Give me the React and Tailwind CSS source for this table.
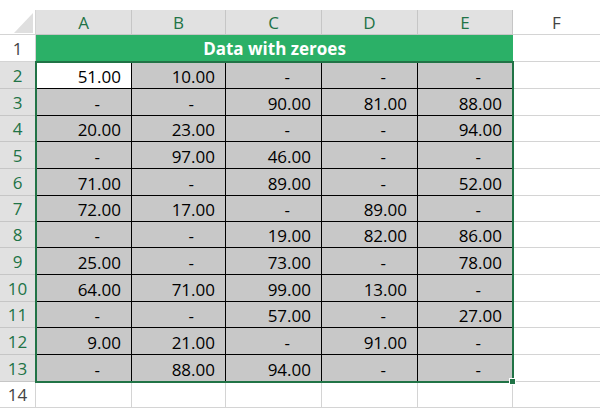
import React from "react";

const rows = [
  ["51.00", "10.00", "-", "-", "-"],
  ["-", "-", "90.00", "81.00", "88.00"],
  ["20.00", "23.00", "-", "-", "94.00"],
  ["-", "97.00", "46.00", "-", "-"],
  ["71.00", "-", "89.00", "-", "52.00"],
  ["72.00", "17.00", "-", "89.00", "-"],
  ["-", "-", "19.00", "82.00", "86.00"],
  ["25.00", "-", "73.00", "-", "78.00"],
  ["64.00", "71.00", "99.00", "13.00", "-"],
  ["-", "-", "57.00", "-", "27.00"],
  ["9.00", "21.00", "-", "91.00", "-"],
  ["-", "88.00", "94.00", "-", "-"],
];

const heights = [27, 27, 27, 26, 27, 27, 26, 26, 27, 27, 26, 27, 27, 26];

export default function App() {
  const font = { fontFamily: '"Open Sans", "Liberation Sans", sans-serif' };
  return (
    <div className="w-[600px] h-[410px] bg-white overflow-hidden pt-[10px] text-[17px] leading-none" style={font}>
      <div className="relative">
        <div
          className="grid grid-cols-[36px_96px_94px_96px_96px_95px_87px]"
          style={{ gridTemplateRows: "25px " + heights.map((h) => h + "px").join(" ") }}
        >
          {/* header row */}
          <div className="relative bg-white border-r border-b border-[#d4d4d4]">
            <svg className="absolute left-0 top-0" width="36" height="25" viewBox="0 0 36 25">
              <polygon points="14,23 33,23 33,3" fill="#dfdfdf" />
            </svg>
          </div>
          {["A", "B", "C", "D", "E"].map((c) => (
            <div key={c} className="flex items-center justify-center bg-[#e1e1e1] border-r border-b border-[#c6c6c6] text-[#217346]">
              {c}
            </div>
          ))}
          <div className="flex items-center justify-center bg-white border-b border-[#d4d4d4] text-[#444]">F</div>

          {/* row 1 */}
          <div className="flex items-center justify-center bg-white border-r border-b border-[#d4d4d4] text-[#444]">1</div>
          <div className="col-span-5 flex items-center justify-center bg-[#2bb067] text-white font-bold">Data with zeroes</div>
          <div className="border-b border-[#d4d4d4]"></div>

          {rows.map((r, i) => (
            <React.Fragment key={i}>
              <div className="flex items-center justify-center bg-[#e1e1e1] border-r border-b border-[#c6c6c6] text-[#217346]">{i + 2}</div>
              {r.map((v, j) => (
                <div
                  key={j}
                  className={
                    "flex items-center justify-end border-r border-b border-black text-black pt-[2px] " +
                    (v === "-" ? "pr-[31px] " : "pr-[10px] ") +
                    (i === 0 && j === 0 ? "bg-white" : "bg-[#c8c8c8]")
                  }
                >
                  {v}
                </div>
              ))}
              <div className="border-b border-[#d4d4d4]"></div>
            </React.Fragment>
          ))}

          {/* row 14 */}
          <div className="flex items-center justify-center bg-white border-r border-b border-[#d4d4d4] text-[#444]">14</div>
          {[0, 1, 2, 3, 4].map((k) => (
            <div key={k} className="border-r border-b border-[#d4d4d4]"></div>
          ))}
          <div className="border-b border-[#d4d4d4]"></div>
        </div>

        {/* selection border */}
        <div className="absolute left-[35px] top-[51px] w-[479px] h-[322px] border-2 border-[#217346] pointer-events-none"></div>
        <div className="absolute left-[509px] top-[368px] w-[7px] h-[7px] bg-[#217346] border border-white"></div>
      </div>
    </div>
  );
}
